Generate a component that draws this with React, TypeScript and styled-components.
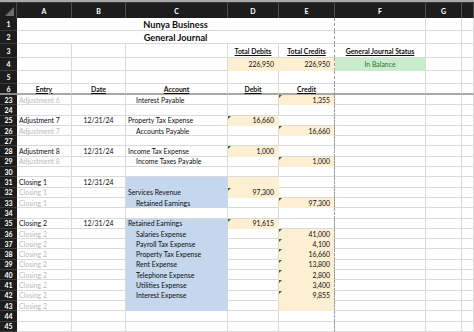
import React from 'react'
import styled, { createGlobalStyle, css } from 'styled-components'

const GlobalStyle = createGlobalStyle`
  html, body {
    margin: 0;
    padding: 0;
    background: #ffffff;
    overflow: hidden;
  }
  body {
    font-family: Lato, "Open Sans", "Liberation Sans", sans-serif;
  }
`

type Fill = 'yellow' | 'blue' | 'green'

const fills: Record<Fill, string> = {
  yellow: '#fcefd2',
  blue: '#c4d7ed',
  green: '#c9eccb',
}

const GRID = '#dadada'

const Sheet = styled.div`
  width: 474px;
  height: 332px;
  overflow: hidden;
  background: #fff;
`

const TopEdge = styled.div`
  height: 3px;
  box-sizing: border-box;
  border-top: 2px solid #a9a9a9;
  background: #3a3a3a;
`

const Grid = styled.div`
  display: grid;
  grid-template-columns: 17px 55px 54px 102px 51px 56px 91px 36px 12px;
  grid-template-rows: 15px 13px 13px 14px 13px 13px 11px repeat(23, 10.3px);
`

const Corner = styled.div`
  position: relative;
  background: #1d1d1d;
  border-right: 1px solid #4a4a4a;
  box-sizing: border-box;
  &::after {
    content: '';
    position: absolute;
    right: 2px;
    bottom: 2px;
    border-left: 9px solid transparent;
    border-bottom: 9px solid #6b6b6b;
  }
`

const ColHead = styled.div`
  background: #1d1d1d;
  color: #ffffff;
  font-weight: 700;
  font-size: 7px;
  display: flex;
  align-items: center;
  justify-content: center;
  border-right: 1px solid #4e4e4e;
  box-sizing: border-box;
`

const RowHead = styled.div<{ $freeze?: boolean }>`
  background: #1d1d1d;
  color: #ffffff;
  font-weight: 700;
  font-size: 7px;
  display: flex;
  align-items: center;
  justify-content: center;
  box-sizing: border-box;
  border-bottom: 1px solid #3c3c3c;
  ${({ $freeze }) =>
    $freeze &&
    css`
      border-bottom: 2px solid #8a8a8a;
    `}
`

type Align = 'left' | 'center' | 'right'

const Cell = styled.div<{
  $align: Align
  $bold?: boolean
  $under?: boolean
  $muted?: boolean
  $fill?: Fill
  $indent?: boolean
  $title?: boolean
  $dashed?: boolean
  $freeze?: boolean
  $flag?: boolean
  $span?: number
  $tone?: 'green'
}>`
  position: relative;
  box-sizing: border-box;
  min-width: 0;
  overflow: visible;
  white-space: nowrap;
  display: flex;
  align-items: center;
  justify-content: ${({ $align }) =>
    $align === 'center' ? 'center' : $align === 'right' ? 'flex-end' : 'flex-start'};
  padding: 0 ${({ $align }) => ($align === 'right' ? '4px' : '2px')} 0
    ${({ $indent }) => ($indent ? '10px' : '2px')};
  font-size: ${({ $title }) => ($title ? '9.2px' : '6.9px')};
  font-weight: ${({ $bold }) => ($bold ? 700 : 400)};
  text-decoration: ${({ $under }) => ($under ? 'underline' : 'none')};
  text-underline-offset: 1px;
  color: ${({ $muted, $tone }) => ($muted ? '#bababa' : $tone === 'green' ? '#2a7631' : '#0e0e0e')};
  background: ${({ $fill }) => ($fill ? fills[$fill] : 'transparent')};
  border-right: 1px solid ${({ $fill }) => ($fill ? fills[$fill] : GRID)};
  border-bottom: 1px solid ${({ $fill }) => ($fill ? fills[$fill] : GRID)};
  ${({ $span }) =>
    $span &&
    css`
      grid-column: span ${$span};
    `}
  ${({ $dashed }) =>
    $dashed &&
    css`
      border-right: 1px dashed #9a9a9a;
    `}
  ${({ $freeze }) =>
    $freeze &&
    css`
      border-bottom: 2px solid #a8a8a8;
    `}
  ${({ $flag }) =>
    $flag &&
    css`
      &::before {
        content: '';
        position: absolute;
        top: 0;
        left: 0;
        border-top: 3px solid #2f6e2f;
        border-right: 3px solid transparent;
      }
    `}
`

type Spec = {
  t?: string
  align?: Align
  bold?: boolean
  under?: boolean
  muted?: boolean
  fill?: Fill
  indent?: boolean
  title?: boolean
  flag?: boolean
  span?: number
  tone?: 'green'
}

type Col = 'A' | 'B' | 'C' | 'D' | 'E' | 'F' | 'G' | 'H'
const COLS: Col[] = ['A', 'B', 'C', 'D', 'E', 'F', 'G', 'H']

const colLabel = (c: Col) => (c === 'H' ? '' : c)

type RowSpec = { n: number; cells: Partial<Record<Col, Spec>> }

const head = (t: string): Spec => ({ t, align: 'center', bold: true, under: true })
const num = (t: string, flag = true): Spec => ({ t, align: 'right', fill: 'yellow', flag })
const muted = (t: string): Spec => ({ t, muted: true })
const date: Spec = { t: '12/31/24', align: 'center' }
const sub = (t: string, fill?: Fill): Spec => ({ t, indent: true, fill })

const rows: RowSpec[] = [
  { n: 1, cells: { A: { t: 'Nunya Business', align: 'center', bold: true, title: true, span: 5 } } },
  { n: 2, cells: { A: { t: 'General Journal', align: 'center', bold: true, title: true, span: 5 } } },
  {
    n: 3,
    cells: { D: head('Total Debits'), E: head('Total Credits'), F: head('General Journal Status') },
  },
  {
    n: 4,
    cells: {
      D: num('226,950', false),
      E: num('226,950', false),
      F: { t: 'In Balance', align: 'center', fill: 'green', tone: 'green' },
    },
  },
  { n: 5, cells: {} },
  {
    n: 6,
    cells: { A: head('Entry'), B: head('Date'), C: head('Account'), D: head('Debit'), E: head('Credit') },
  },
  { n: 23, cells: { A: muted('Adjustment 6'), C: sub('Interest Payable'), E: num('1,355') } },
  { n: 24, cells: {} },
  { n: 25, cells: { A: { t: 'Adjustment 7' }, B: date, C: { t: 'Property Tax Expense' }, D: num('16,660') } },
  { n: 26, cells: { A: muted('Adjustment 7'), C: sub('Accounts Payable'), E: num('16,660') } },
  { n: 27, cells: {} },
  { n: 28, cells: { A: { t: 'Adjustment 8' }, B: date, C: { t: 'Income Tax Expense' }, D: num('1,000') } },
  { n: 29, cells: { A: muted('Adjustment 8'), C: sub('Income Taxes Payable'), E: num('1,000') } },
  { n: 30, cells: {} },
  { n: 31, cells: { A: { t: 'Closing 1' }, B: date, C: { fill: 'blue' }, D: { fill: 'yellow' } } },
  {
    n: 32,
    cells: { A: muted('Closing 1'), C: { t: 'Services Revenue', fill: 'blue' }, D: num('97,300') },
  },
  { n: 33, cells: { A: muted('Closing 1'), C: sub('Retained Earnings', 'blue'), E: num('97,300') } },
  { n: 34, cells: {} },
  {
    n: 35,
    cells: {
      A: { t: 'Closing 2' },
      B: date,
      C: { t: 'Retained Earnings', fill: 'blue' },
      D: num('91,615'),
    },
  },
  { n: 36, cells: { A: muted('Closing 2'), C: sub('Salaries Expense', 'blue'), E: num('41,000') } },
  { n: 37, cells: { A: muted('Closing 2'), C: sub('Payroll Tax Expense', 'blue'), E: num('4,100') } },
  { n: 38, cells: { A: muted('Closing 2'), C: sub('Property Tax Expense', 'blue'), E: num('16,660') } },
  { n: 39, cells: { A: muted('Closing 2'), C: sub('Rent Expense', 'blue'), E: num('13,800') } },
  { n: 40, cells: { A: muted('Closing 2'), C: sub('Telephone Expense', 'blue'), E: num('2,800') } },
  { n: 41, cells: { A: muted('Closing 2'), C: sub('Utilities Expense', 'blue'), E: num('3,400') } },
  { n: 42, cells: { A: muted('Closing 2'), C: sub('Interest Expense', 'blue'), E: num('9,855') } },
  { n: 43, cells: { A: muted('Closing 2'), C: { fill: 'blue' }, E: { fill: 'yellow' } } },
  { n: 44, cells: {} },
  { n: 45, cells: {} },
]

const SheetRow: React.FC<{ row: RowSpec }> = ({ row }) => {
  const out: React.ReactNode[] = []
  const freeze = row.n === 6
  out.push(
    <RowHead key="h" $freeze={freeze}>
      {row.n}
    </RowHead>,
  )
  let skip = 0
  COLS.forEach((col, i) => {
    if (skip > 0) {
      skip--
      return
    }
    const s = row.cells[col] ?? {}
    const span = s.span ?? 1
    skip = span - 1
    const last = i + span - 1
    out.push(
      <Cell
        key={col}
        $align={s.align ?? 'left'}
        $bold={s.bold}
        $under={s.under}
        $muted={s.muted}
        $fill={s.fill}
        $indent={s.indent}
        $title={s.title}
        $flag={s.flag}
        $tone={s.tone}
        $span={span > 1 ? span : undefined}
        $dashed={COLS[last] === 'E'}
        $freeze={freeze}
      >
        {s.t}
      </Cell>,
    )
  })
  return <>{out}</>
}

export default function App() {
  return (
    <>
      <GlobalStyle />
      <Sheet>
        <TopEdge />
        <Grid>
          <Corner />
          {COLS.map((c) => (
            <ColHead key={c}>{colLabel(c)}</ColHead>
          ))}
          {rows.map((r) => (
            <SheetRow key={r.n} row={r} />
          ))}
        </Grid>
      </Sheet>
    </>
  )
}
